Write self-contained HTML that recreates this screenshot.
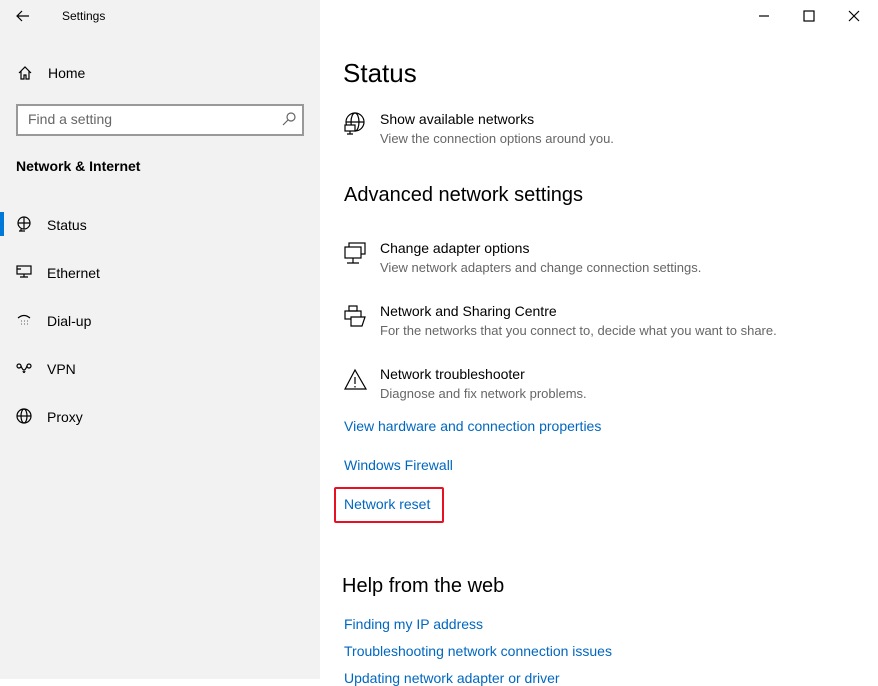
<!DOCTYPE html>
<html><head><style>
body{margin:0;width:878px;height:679px;overflow:hidden;font-family:"Liberation Sans",sans-serif;background:#fff;position:relative}
.side{position:absolute;left:0;top:0;width:320px;height:679px;background:#f2f2f2}
.t{position:absolute;white-space:nowrap;color:#000}
.s{font-size:14px}
.g{color:#666;font-size:13px}
.l{color:#0067c0;font-size:14px}
svg{position:absolute;fill:none;stroke:#000;stroke-width:1.2}
</style></head><body>
<div class="side"></div>
<svg style="left:15px;top:8px" width="16" height="16"><path d="M14 8H2M7 3L2 8l5 5"/></svg>
<div class="t" style="left:62px;top:9px;font-size:12px">Settings</div>
<svg style="left:758px;top:10px" width="12" height="12"><path d="M1 6h10"/></svg>
<svg style="left:803px;top:10px" width="12" height="12"><rect x="1" y="1" width="10" height="10"/></svg>
<svg style="left:848px;top:10px" width="12" height="12"><path d="M1 1l10 10M11 1L1 11"/></svg>
<svg style="left:17px;top:65px" width="16" height="16"><path d="M2 8L8 2l6 6M4 6v8h3v-4h2v4h3V6"/></svg>
<div class="t s" style="left:48px;top:65px">Home</div>
<div style="position:absolute;left:16px;top:104px;width:284px;height:28px;border:2px solid #999;background:#fff"></div>
<div class="t" style="left:28px;top:111px;font-size:14px;color:#666">Find a setting</div>
<svg style="left:282px;top:112px;stroke:#666" width="14" height="14"><circle cx="9" cy="5" r="4"/><path d="M6 8l-5 5"/></svg>
<div class="t" style="left:16px;top:158px;font-size:14px;font-weight:bold">Network &amp; Internet</div>
<div style="position:absolute;left:0;top:212px;width:4px;height:24px;background:#0078d7"></div>
<svg style="left:16px;top:216px" width="16" height="16"><circle cx="8" cy="7" r="6"/><path d="M2 7h12M8 1v12M5 13v2M3 15h6"/></svg>
<div class="t s" style="left:47px;top:217px">Status</div>
<svg style="left:16px;top:264px" width="16" height="16"><rect x="1" y="2" width="14" height="8"/><path d="M8 10v3M4 13h8M1 5h4"/></svg>
<div class="t s" style="left:47px;top:265px">Ethernet</div>
<svg style="left:16px;top:312px" width="16" height="16"><path d="M2 6q6-5 12 0M5 9h.5M8 9h.5M11 9h.5M5 12h.5M8 12h.5M11 12h.5"/></svg>
<div class="t s" style="left:47px;top:313px">Dial-up</div>
<svg style="left:16px;top:360px" width="16" height="16"><circle cx="3" cy="6" r="2"/><circle cx="13" cy="6" r="2"/><path d="M5 6q3 8 6 0M7 11q1 3 2 0"/></svg>
<div class="t s" style="left:47px;top:361px">VPN</div>
<svg style="left:16px;top:408px" width="16" height="16"><circle cx="8" cy="8" r="7"/><ellipse cx="8" cy="8" rx="3" ry="7"/><path d="M1 8h14"/></svg>
<div class="t s" style="left:47px;top:409px">Proxy</div>

<div class="t" style="left:343px;top:58px;font-size:26px">Status</div>
<svg style="left:344px;top:112px" width="24" height="24"><circle cx="11" cy="10" r="9"/><ellipse cx="11" cy="10" rx="4" ry="9"/><path d="M2 10h18"/><rect x="1" y="13" width="10" height="6" fill="#fff"/><path d="M6 19v3M3 22h6"/></svg>
<div class="t s" style="left:380px;top:111px">Show available networks</div>
<div class="t g" style="left:380px;top:131px">View the connection options around you.</div>
<div class="t" style="left:344px;top:184px;font-size:20px">Advanced network settings</div>
<svg style="left:344px;top:242px" width="24" height="24"><rect x="5" y="1" width="16" height="11"/><rect x="1" y="5" width="16" height="11" fill="#fff"/><path d="M9 16v5M3 21h12"/></svg>
<div class="t s" style="left:380px;top:240px">Change adapter options</div>
<div class="t g" style="left:380px;top:260px">View network adapters and change connection settings.</div>
<svg style="left:344px;top:305px" width="24" height="24"><rect x="5" y="1" width="8" height="5"/><rect x="1" y="6" width="16" height="8"/><path d="M7 12h14l-3 9H7z" fill="#fff"/></svg>
<div class="t s" style="left:380px;top:303px">Network and Sharing Centre</div>
<div class="t g" style="left:380px;top:323px">For the networks that you connect to, decide what you want to share.</div>
<svg style="left:344px;top:368px" width="24" height="24"><path d="M11 2L1 21h21z M11 9v7M11 18v1.5"/></svg>
<div class="t s" style="left:380px;top:366px">Network troubleshooter</div>
<div class="t g" style="left:380px;top:386px">Diagnose and fix network problems.</div>
<div class="t l" style="left:344px;top:418px">View hardware and connection properties</div>
<div class="t l" style="left:344px;top:457px">Windows Firewall</div>
<div style="position:absolute;left:334px;top:487px;width:106px;height:32px;border:2px solid #e81123;border-radius:2px"></div>
<div class="t l" style="left:344px;top:496px">Network reset</div>
<div class="t" style="left:342px;top:575px;font-size:20px">Help from the web</div>
<div class="t l" style="left:344px;top:616px">Finding my IP address</div>
<div class="t l" style="left:344px;top:643px">Troubleshooting network connection issues</div>
<div class="t l" style="left:344px;top:670px">Updating network adapter or driver</div>
</body></html>
